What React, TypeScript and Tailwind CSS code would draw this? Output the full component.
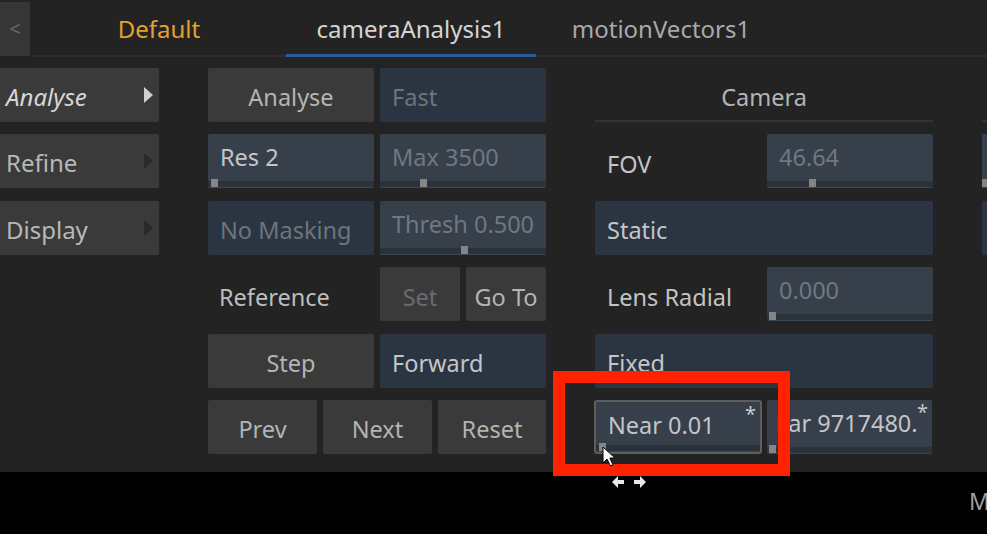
import React from "react";

const font = { fontFamily: '"Noto Sans", "Open Sans", sans-serif' };

function Btn({ children, dim, className = "" }: { children: React.ReactNode; dim?: boolean; className?: string }) {
  return (
    <div
      className={`h-[54px] rounded-[2px] bg-[#3a3a3a] flex items-center justify-center pt-[6px] text-[23.5px] ${dim ? "text-[#6b6b6b]" : "text-[#b4b4b4]"} ${className}`}
    >
      {children}
    </div>
  );
}

function Field({ children, dim, className = "" }: { children: React.ReactNode; dim?: boolean; className?: string }) {
  return (
    <div
      className={`h-[54px] rounded-[2px] bg-[#2b3441] flex items-center pl-3 pt-[6px] text-[23.5px] ${dim ? "text-[#6c747e]" : "text-[#c2c6cb]"} ${className}`}
    >
      {children}
    </div>
  );
}

function Slider({
  children,
  dim,
  handle,
  star,
  className = "",
  textClass = "",
}: {
  children: React.ReactNode;
  dim?: boolean;
  handle: number;
  star?: boolean;
  className?: string;
  textClass?: string;
}) {
  return (
    <div className={`relative h-[54px] rounded-[2px] bg-[#363f4a] flex flex-col overflow-hidden ${className}`}>
      <div
        className={`flex-1 flex items-start pt-[8px] pl-3 text-[23.5px] leading-[30px] whitespace-nowrap overflow-hidden ${dim ? "text-[#6f7882]" : "text-[#c2c6cb]"} ${textClass}`}
      >
        {children}
      </div>
      <div className="h-[7px] bg-[#2a323c] border-b border-[#3f4752]" />
      <div className="absolute bottom-[1px] w-[7px] h-[8px] bg-[#858585]" style={{ left: handle }} />
      {star && <div className="absolute right-[4px] top-[2px] text-[20px] leading-[20px] text-[#c8c8c8]">*</div>}
    </div>
  );
}

function Menu({ label, italic, active }: { label: string; italic?: boolean; active?: boolean }) {
  return (
    <div
      className={`relative h-[54px] rounded-r-[2px] bg-[#3a3a3a] flex items-center pl-[6px] pt-[4px] text-[24px] ${italic ? "italic text-[#d6d6d6]" : "text-[#b8b8b8]"}`}
    >
      {label}
      <svg width="9" height="16" viewBox="0 0 9 16" className="absolute right-[6px] top-[19px]">
        <path d="M0 0 L9 8 L0 16 Z" fill={active ? "#d0d0d0" : "#2a2a2a"} />
      </svg>
    </div>
  );
}

export default function App() {
  return (
    <div className="w-[987px] h-[534px] bg-black overflow-hidden relative" style={font}>
      <div className="h-[472px] bg-[#232323] flex flex-col overflow-hidden">
        {/* top bar */}
        <div className="h-[57px] flex items-stretch shrink-0">
          <div className="w-[30px] shrink-0 mt-[2px] mb-[1px] bg-[#363636] rounded-r-[2px] flex items-center justify-center text-[20px] text-[#6a6a6a]">
            &lt;
          </div>
          <div className="flex-1 flex items-stretch border-b-[2px] border-[#2e2e2e] ml-[2px]">
            <div className="w-[254px] shrink-0 flex items-center justify-center text-[24px] text-[#e3a12e] pt-[3px]">Default</div>
            <div className="w-[250px] shrink-0 flex items-center justify-center text-[24px] text-[#d4d4d4] pt-[3px] border-b-[3px] border-[#2c5b9c] -mb-[2px]">
              cameraAnalysis1
            </div>
            <div className="w-[250px] shrink-0 flex items-center justify-center text-[24px] text-[#a9a9a9] pt-[3px]">motionVectors1</div>
          </div>
        </div>

        {/* body */}
        <div className="flex pt-[11px]">
          {/* left menu */}
          <div className="w-[159px] shrink-0 flex flex-col gap-[12.4px]">
            <Menu label="Analyse" italic active />
            <Menu label="Refine" />
            <Menu label="Display" />
          </div>

          {/* middle */}
          <div className="ml-[49px] w-[338px] shrink-0 flex flex-col gap-[12.4px]">
            <div className="grid grid-cols-2 gap-[6px]">
              <Btn>Analyse</Btn>
              <Field dim>Fast</Field>
            </div>
            <div className="grid grid-cols-2 gap-[6px]">
              <Slider handle={3}>Res 2</Slider>
              <Slider dim handle={40}>Max 3500</Slider>
            </div>
            <div className="grid grid-cols-2 gap-[6px]">
              <Field dim>No Masking</Field>
              <Slider dim handle={81} textClass="pl-[12px]">Thresh 0.500</Slider>
            </div>
            <div className="grid grid-cols-[166px_80px_80px] gap-[6px]">
              <div className="h-[54px] flex items-center pl-[11px] pt-[6px] text-[23.5px] text-[#bdbdbd]">Reference</div>
              <Btn dim>Set</Btn>
              <Btn>Go To</Btn>
            </div>
            <div className="grid grid-cols-2 gap-[6px]">
              <Btn>Step</Btn>
              <Field>Forward</Field>
            </div>
            <div className="grid grid-cols-[109px_109px_108px] gap-[6px]">
              <Btn>Prev</Btn>
              <Btn>Next</Btn>
              <Btn>Reset</Btn>
            </div>
          </div>

          {/* right */}
          <div className="ml-[49px] w-[338px] shrink-0 flex flex-col gap-[12.4px]">
            <div className="h-[54px] flex items-center justify-center text-[23.5px] text-[#b4b4b4] border-b-[2px] border-[#333333] pt-[8px]">
              Camera
            </div>
            <div className="grid grid-cols-[166px_166px] gap-[6px]">
              <div className="h-[54px] flex items-center pl-[12px] pt-[6px] text-[23.5px] text-[#c4c4c4]">FOV</div>
              <Slider dim handle={42}>46.64</Slider>
            </div>
            <Field>Static</Field>
            <div className="grid grid-cols-[166px_166px] gap-[6px]">
              <div className="h-[54px] flex items-center pl-[12px] pt-[6px] text-[23.5px] text-[#c4c4c4]">Lens Radial</div>
              <Slider dim handle={2}>0.000</Slider>
            </div>
            <Field>Fixed</Field>
            <div className="grid grid-cols-[168px_165px] gap-[5px] -ml-[1px]">
              <Slider handle={3} star className="border-2 border-[#5e5e5e] rounded-[3px]" textClass="pt-[6px]">
                Near 0.01
              </Slider>
              <Slider handle={2} star textClass="pl-[9px]">
                Far 9717480.
              </Slider>
            </div>
          </div>

          {/* far right partial column */}
          <div className="ml-[49px] w-[20px] shrink-0 flex flex-col gap-[12.4px]">
            <div className="h-[54px] border-b-[2px] border-[#333333]" />
            <div className="h-[54px] bg-[#363f4a] relative">
              <div className="absolute bottom-[1px] left-0 w-[5px] h-[8px] bg-[#858585]" />
            </div>
            <div className="h-[54px] bg-[#2b3441]" />
          </div>
        </div>
      </div>

      {/* red highlight */}
      <div className="absolute left-[553px] top-[371px] w-[237px] h-[105px] border-[12px] border-[#ff2200]" />

      {/* cursor */}
      <svg className="absolute left-[602px] top-[446px]" width="17" height="21" viewBox="0 0 17 21">
        <path d="M1 1 L1 17 L5 13 L8.5 20 L11 19 L7.8 12 L13 12 Z" fill="#ffffff" stroke="#000" strokeWidth="1" />
      </svg>
      <svg className="absolute left-[611px] top-[475px]" width="36" height="14" viewBox="0 0 36 14">
        <path d="M1 7 L7 1 L7 5 L13 5 L13 9 L7 9 L7 13 Z" fill="#e8e8e8" />
        <path d="M35 7 L29 1 L29 5 L23 5 L23 9 L29 9 L29 13 Z" fill="#e8e8e8" />
      </svg>

      <div className="absolute left-[969px] top-[484px] text-[23px] text-[#a0a0a0]">M</div>
    </div>
  );
}
